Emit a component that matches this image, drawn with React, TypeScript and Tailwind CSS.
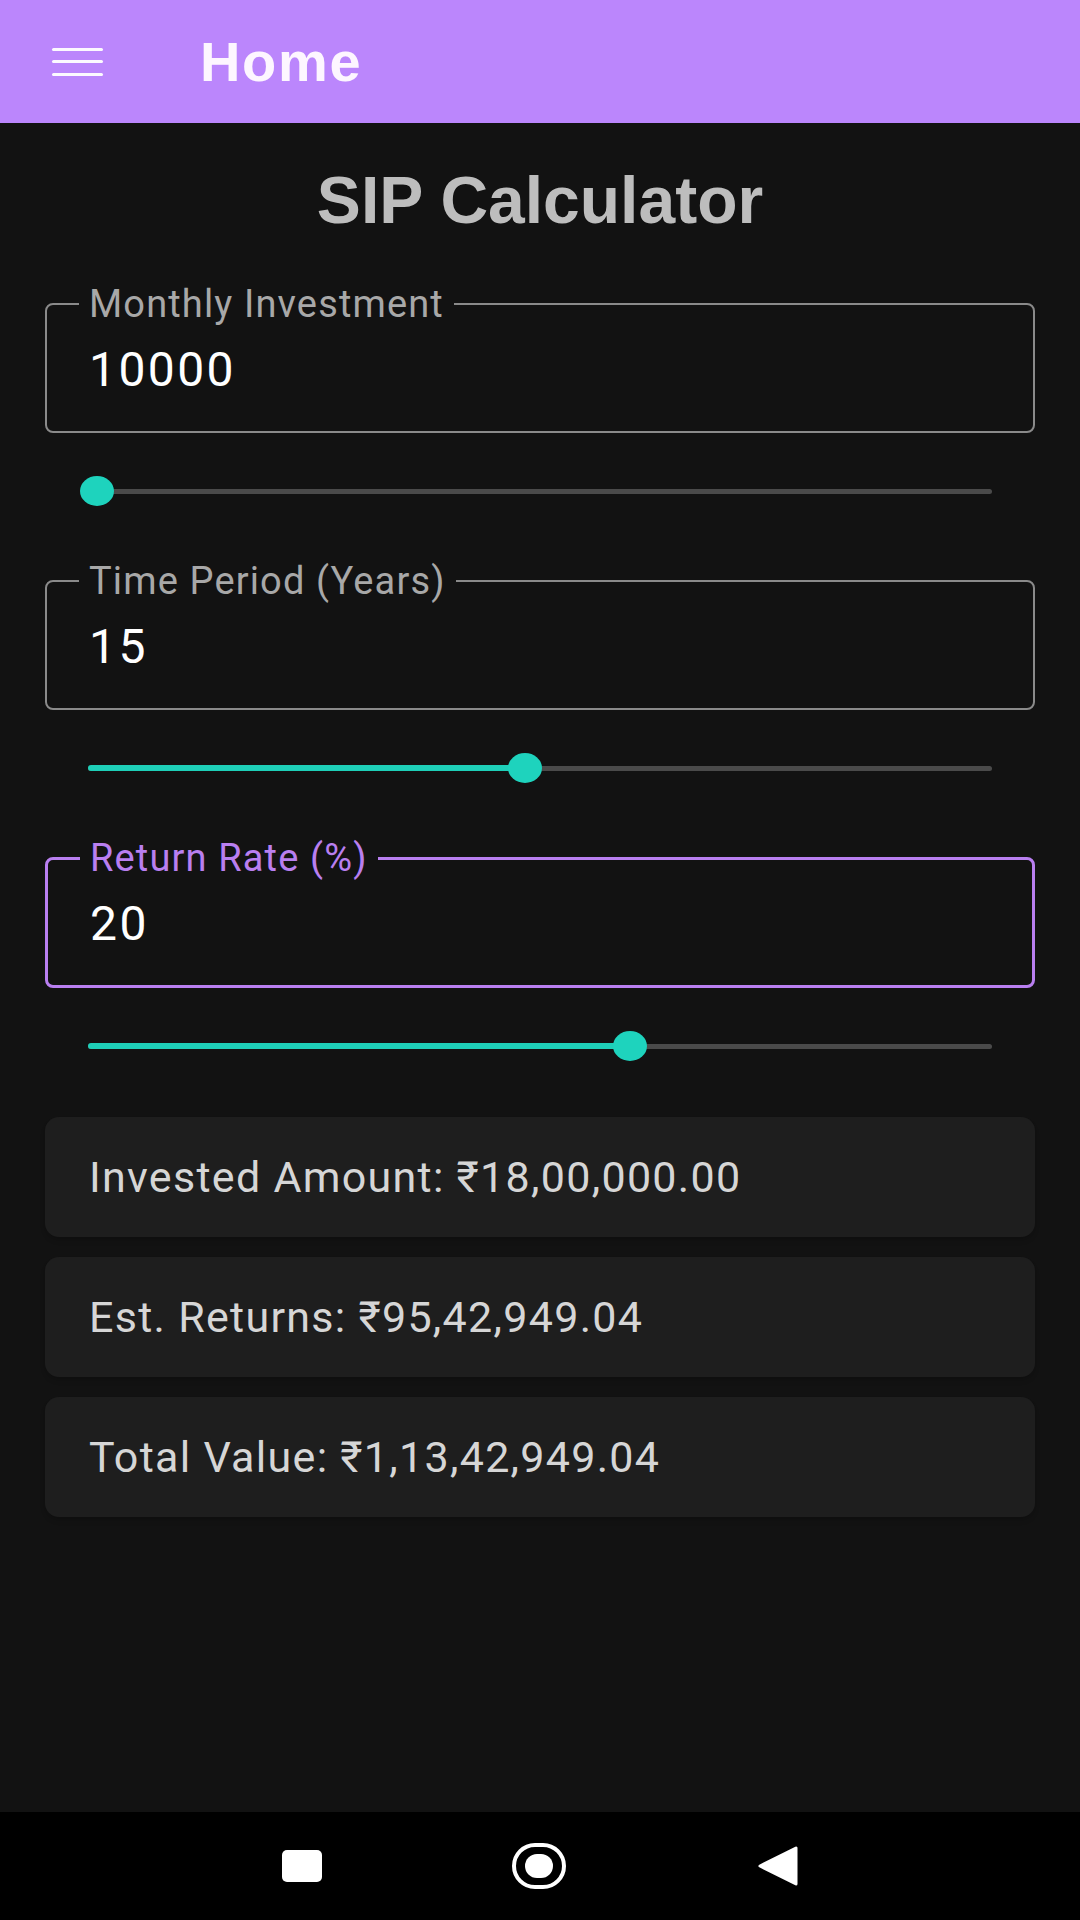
import React from "react";

const fields = [
  { label: "Monthly Investment", value: "10000", pct: 0, focused: false },
  { label: "Time Period (Years)", value: "15", pct: 48.3, focused: false },
  { label: "Return Rate (%)", value: "20", pct: 60, focused: true },
];

const results = [
  "Invested Amount: ₹18,00,000.00",
  "Est. Returns: ₹95,42,949.04",
  "Total Value: ₹1,13,42,949.04",
];

function Slider({ pct }: { pct: number }) {
  return (
    <div className="mt-[29px] mx-[43px] h-[58px] flex items-center">
      <div className="relative w-full h-[5px] bg-[#4a4a4a] rounded-full">
        <div className="absolute left-0 top-1/2 -translate-y-1/2 h-[6px] bg-[#1ecfb8] rounded-full" style={{ width: `${pct}%` }} />
        <div
          className="absolute top-1/2 -translate-y-1/2 -translate-x-1/2 w-[34px] h-[30px] rounded-[50%] bg-[#1ed3bd]"
          style={{ left: `calc(${pct}% + ${pct === 0 ? 9 : 0}px)` }}
        />
      </div>
    </div>
  );
}

export default function App() {
  return (
    <div className="w-[1080px] h-[1920px] flex flex-col bg-[#121212] font-['Roboto',sans-serif]">
      {/* App bar */}
      <div className="h-[123px] bg-[#bb86fc] flex items-center shrink-0">
        <div className="ml-[52px] w-[51px] flex flex-col gap-[9.5px]">
          <div className="h-[3px] bg-white/95 rounded-sm" />
          <div className="h-[3px] bg-white/95 rounded-sm" />
          <div className="h-[3px] bg-white/95 rounded-sm" />
        </div>
        <div className="ml-[97px] text-[56px] font-bold text-[#fdf6ff] tracking-[0.03em] font-['Liberation_Sans',sans-serif]">
          Home
        </div>
      </div>

      <main className="flex-1 px-[45px]">
        <h1 className="mt-[44px] text-center text-[66px] font-bold text-[#bdbdbd] font-['Liberation_Sans',sans-serif] leading-none">
          SIP Calculator
        </h1>

        <div className="mt-[52px]">
          {fields.map((f) => (
            <div key={f.label} className="mb-[42px]">
              <fieldset
                className={`rounded-[8px] px-[30px] ${
                  f.focused ? "border-[3px] border-[#b97ff0] pb-[37px]" : "border-2 border-[#8a8a8a] pb-[37px]"
                }`}
              >
                <legend
                  className={`ml-[2px] px-[10px] text-[38px] leading-none tracking-[0.03em] ${
                    f.focused ? "text-[#b97ff0]" : "text-[#a8a8a8]"
                  }`}
                >
                  {f.label}
                </legend>
                <div className="mt-[23px] ml-[12px] text-[48px] text-white tracking-[0.05em] leading-none">{f.value}</div>
              </fieldset>
              <Slider pct={f.pct} />
            </div>
          ))}
        </div>

        <div className="mt-[7px] flex flex-col gap-[20px]">
          {results.map((r) => (
            <div key={r} className="h-[120px] rounded-[14px] bg-[#1e1e1e] shadow-md flex items-center px-[44px]">
              <span className="text-[43px] text-[#d6d6d6] tracking-[0.03em]">{r}</span>
            </div>
          ))}
        </div>
      </main>

      {/* Android nav bar */}
      <div className="h-[108px] bg-black flex items-center justify-center gap-[190px] shrink-0">
        <div className="w-[40px] h-[32px] bg-white rounded-[5px]" />
        <div className="w-[54px] h-[46px] rounded-full border-[4px] border-white flex items-center justify-center">
          <div className="w-[28px] h-[24px] rounded-full bg-white" />
        </div>
        <svg width="42" height="40" viewBox="0 0 42 40">
          <path d="M40 2 L40 38 L4 20 Z" fill="white" stroke="white" strokeWidth="3" strokeLinejoin="round" />
        </svg>
      </div>
    </div>
  );
}
